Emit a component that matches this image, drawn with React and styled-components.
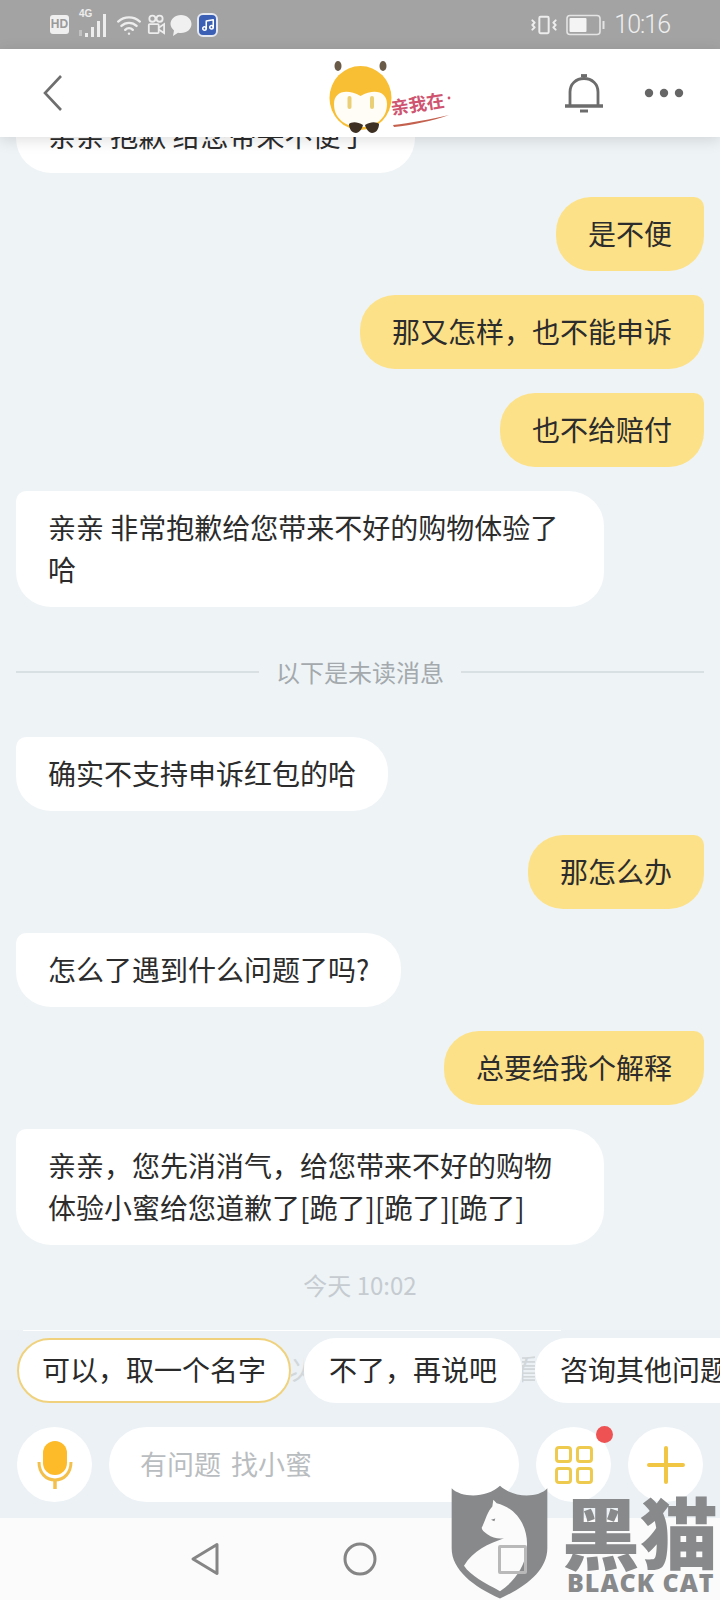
import React from 'react'
import styled, { createGlobalStyle } from 'styled-components'
import { Wifi, Vibrate, Music } from 'lucide-react'

const GlobalStyle = createGlobalStyle`
    html, body {
        margin: 0;
        padding: 0;
        background: #eef3f6;
    }
    * {
        box-sizing: border-box;
    }
`

const cjk = `"Noto Sans CJK SC", "Noto Sans", sans-serif`

const messages = [
    { id: 1, mine: false, width: 399, lines: ['亲亲 抱歉 给您带来不便了'] },
    { id: 2, mine: true, lines: ['是不便'] },
    { id: 3, mine: true, lines: ['那又怎样，也不能申诉'] },
    { id: 4, mine: true, lines: ['也不给赔付'] },
    { id: 5, mine: false, width: 588, lines: ['亲亲 非常抱歉给您带来不好的购物体验了', '哈'] },
    { id: 'unread', divider: '以下是未读消息' },
    { id: 6, mine: false, lines: ['确实不支持申诉红包的哈'] },
    { id: 7, mine: true, lines: ['那怎么办'] },
    { id: 8, mine: false, lines: ['怎么了遇到什么问题了吗?'] },
    { id: 9, mine: true, lines: ['总要给我个解释'] },
    { id: 10, mine: false, width: 588, lines: ['亲亲，您先消消气，给您带来不好的购物', '体验小蜜给您道歉了[跪了][跪了][跪了]'] },
]

export default function App() {
    return (
        <>
            <GlobalStyle />
            <Screen>
                <StatusBar>
                    <StatusGroup>
                        <HdBadge>HD</HdBadge>
                        <SignalIcon />
                        <Wifi size={26} color="#ededed" strokeWidth={2.2} />
                        <CameraIcon />
                        <ChatIcon />
                        <MusicBadge><Music size={14} color="#fff" strokeWidth={2.6} /></MusicBadge>
                    </StatusGroup>
                    <StatusRight>
                        <Vibrate size={28} color="#ededed" strokeWidth={1.7} />
                        <BatteryIcon />
                        <Clock>10:16</Clock>
                    </StatusRight>
                </StatusBar>

                <Header>
                    <BackIcon />
                    <LogoIcon />
                    <HeaderActions>
                        <BellIcon />
                        <MoreIcon />
                    </HeaderActions>
                </Header>

                <Chat>
                    {messages.map((m) =>
                        m.divider ? (
                            <Divider key={m.id}><span>{m.divider}</span></Divider>
                        ) : (
                            <Bubble key={m.id} $mine={m.mine} $width={m.width}>
                                {m.lines.map((line) => <div key={line}>{line}</div>)}
                            </Bubble>
                        )
                    )}
                    <TimeStamp>今天 10:02</TimeStamp>
                </Chat>

                <Composer>
                    <Chips>
                        <Chip $active>可以，取一个名字</Chip>
                        <GhostText>以</GhostText>
                        <Chip>不了，再说吧</Chip>
                        <GhostText>看</GhostText>
                        <Chip>咨询其他问题</Chip>
                    </Chips>
                    <InputRow>
                        <RoundButton><MicIcon /></RoundButton>
                        <InputBox>有问题 找小蜜</InputBox>
                        <RoundButton>
                            <GridIcon />
                            <RedDot />
                        </RoundButton>
                        <RoundButton><PlusIcon /></RoundButton>
                    </InputRow>
                </Composer>

                <NavBar>
                    <svg width="30" height="34" viewBox="0 0 30 34">
                        <path d="M28 2.5 L4 17 L28 31.5 Z" fill="none" stroke="#858585" strokeWidth="3" strokeLinejoin="round" />
                    </svg>
                    <svg width="34" height="34" viewBox="0 0 34 34">
                        <circle cx="17" cy="17" r="15" fill="none" stroke="#858585" strokeWidth="3" />
                    </svg>
                    <NavSquare />
                </NavBar>

                <Watermark>
                    <ShieldIcon />
                    <WatermarkText>
                        <WatermarkTitle>黑猫</WatermarkTitle>
                        <WatermarkSub>BLACK CAT</WatermarkSub>
                    </WatermarkText>
                </Watermark>
            </Screen>
        </>
    )
}

function SignalIcon() {
    return (
        <SignalWrap>
            <SignalLabel>4G</SignalLabel>
            <svg width="34" height="28" viewBox="0 0 34 28">
                <rect x="2" y="19" width="3" height="6" fill="#c2c2c2" />
                <rect x="8" y="22" width="3" height="4" fill="#ededed" />
                <rect x="14" y="16" width="3" height="10" fill="#ededed" />
                <rect x="20" y="10" width="3" height="16" fill="#ededed" />
                <rect x="26" y="3" width="3" height="23" fill="#ededed" />
            </svg>
        </SignalWrap>
    )
}

function CameraIcon() {
    return (
        <svg width="18" height="22" viewBox="0 0 20 24" fill="none" stroke="#ededed" strokeWidth="2">
            <circle cx="6" cy="5" r="3.4" />
            <circle cx="14" cy="5" r="3.4" />
            <rect x="2" y="11" width="11" height="10" rx="1" />
            <path d="M13 15 L19 11 V21 L13 17" />
        </svg>
    )
}

function ChatIcon() {
    return (
        <svg width="22" height="24" viewBox="0 0 22 24">
            <path d="M11 2 C17 2 21.5 6 21.5 11 C21.5 16 17 20 11 20 C10 20 9 20 8 19.7 L3 23 L4 17.4 C2 15.8 .5 13.6 .5 11 C.5 6 5 2 11 2 Z" fill="#f0f0f0" />
        </svg>
    )
}

function BatteryIcon() {
    return (
        <svg width="40" height="22" viewBox="0 0 40 22">
            <rect x="1" y="1.5" width="33" height="19" rx="3" fill="none" stroke="#e4e4e4" strokeWidth="1.6" />
            <rect x="3.5" y="4" width="17" height="14" rx="1" fill="#f4f4f4" />
            <rect x="36.5" y="7" width="2" height="8" fill="#e4e4e4" />
        </svg>
    )
}

function BackIcon() {
    return (
        <svg width="20" height="38" viewBox="0 0 20 38">
            <path d="M18 2 L2 19 L18 36" fill="none" stroke="#6e6e6e" strokeWidth="2.6" />
        </svg>
    )
}

function LogoIcon() {
    return (
        <LogoSvg width="130" height="80" viewBox="324 52 130 80">
            <ellipse cx="338" cy="62" rx="3.5" ry="5" fill="#6a5a48" />
            <ellipse cx="383" cy="62" rx="3.5" ry="5" fill="#6a5a48" />
            <ellipse cx="360.5" cy="94" rx="31" ry="32" fill="#f8bf35" />
            <path d="M334 100 C334 88 346 84 360.5 92 C375 84 387 88 387 100 C387 115 375 123 360.5 123 C346 123 334 115 334 100 Z" fill="#fffdf5" />
            <rect x="347.5" y="92" width="4" height="13" rx="2" fill="#ebcf76" />
            <rect x="370" y="92" width="4" height="13" rx="2" fill="#ebcf76" />
            <path d="M363 121 C357 117 351 118 349 120 C349 125 352 129 356 129 C359 129 362 125 363 121 Z" fill="#3d2f22" />
            <path d="M365 121 C371 117 377 118 379 120 C379 125 376 129 372 129 C369 129 366 125 365 121 Z" fill="#3d2f22" />
            <text x="392" y="111" transform="rotate(-9 392 111)" fontFamily={cjk} fontSize="18" fontWeight="700" fill="#cf5470">亲我在</text>
            <path d="M393 121 C410 119 432 115 449 111 C432 117 412 121 394 123 Z" fill="#c4604e" />
            <circle cx="449" cy="94" r="1.4" fill="#cf5470" />
        </LogoSvg>
    )
}

function BellIcon() {
    return (
        <svg width="40" height="40" viewBox="0 0 40 40" fill="none" stroke="#6c6c6c">
            <path d="M6 32 V19 C6 11 12 5.5 20 5.5 C28 5.5 34 11 34 19 V32" strokeWidth="2.8" />
            <path d="M1 33 H39" strokeWidth="3.4" />
            <path d="M17 2.6 H23" strokeWidth="3" />
            <path d="M16 38 H24" strokeWidth="3" />
        </svg>
    )
}

function MoreIcon() {
    return (
        <svg width="40" height="10" viewBox="0 0 40 10">
            <circle cx="5" cy="5" r="4.2" fill="#666" />
            <circle cx="20" cy="5" r="4.2" fill="#666" />
            <circle cx="35" cy="5" r="4.2" fill="#666" />
        </svg>
    )
}

function MicIcon() {
    return (
        <svg width="36" height="50" viewBox="0 0 36 50">
            <rect x="6" y="1" width="24" height="34" rx="12" fill="#fdbb29" />
            <path d="M2 22 C2 33 9 40 18 40 C27 40 34 33 34 22" fill="none" stroke="#f3c14b" strokeWidth="3" />
            <path d="M18 39 V49" stroke="#f3c14b" strokeWidth="3.5" />
        </svg>
    )
}

function GridIcon() {
    return (
        <svg width="38" height="38" viewBox="0 0 38 38" fill="none" stroke="#eecb4f" strokeWidth="3">
            <rect x="1.5" y="1.5" width="14" height="14" rx="2.5" />
            <rect x="22.5" y="1.5" width="14" height="14" rx="2.5" />
            <rect x="1.5" y="22.5" width="14" height="14" rx="2.5" />
            <rect x="22.5" y="22.5" width="14" height="14" rx="2.5" />
        </svg>
    )
}

function PlusIcon() {
    return (
        <svg width="38" height="38" viewBox="0 0 38 38" stroke="#f1c644" strokeWidth="4" strokeLinecap="round">
            <path d="M19 2 V36 M2 19 H36" />
        </svg>
    )
}

function ShieldIcon() {
    return (
        <svg width="100" height="117" viewBox="60 40 300 350">
            <path d="M65 55 C95 85 170 85 210 48 C250 85 325 85 352 55 V235 C352 300 290 350 210 386 C130 350 65 300 65 235 Z" fill="#88898b" />
            <path d="M190 90 L200 100 C262 115 298 175 290 240 C284 295 250 338 210 364 C165 340 122 318 102 288 C130 240 175 222 222 205 C205 207 188 205 172 193 C162 187 155 180 155 174 C165 155 172 125 187 110 Z" fill="#fbfbfb" />
            <path d="M183 150 L196 146 L193 154 Z" fill="#88898b" />
        </svg>
    )
}

const Screen = styled.div`
    position: relative;
    display: flex;
    flex-direction: column;
    width: 720px;
    height: 1600px;
    overflow: hidden;
    background: #eef3f6;
    font-family: ${cjk};
`

const StatusBar = styled.div`
    display: flex;
    align-items: center;
    justify-content: space-between;
    flex: 0 0 49px;
    padding: 0 50px;
    background: #a3a3a3;
`

const StatusGroup = styled.div`
    display: flex;
    align-items: center;
    gap: 5px;
`

const StatusRight = styled.div`
    display: flex;
    align-items: center;
    gap: 8px;
`

const HdBadge = styled.span`
    width: 19px;
    height: 19px;
    margin-right: 3px;
    border-radius: 3px;
    background: #efefef;
    color: #9a9a9a;
    font: 700 12px/19px "Liberation Sans", sans-serif;
    text-align: center;
`

const SignalWrap = styled.div`
    position: relative;
    display: flex;
`

const SignalLabel = styled.span`
    position: absolute;
    left: 2px;
    top: -3px;
    color: #ededed;
    font: 700 10px/12px "Liberation Sans", sans-serif;
`

const MusicBadge = styled.span`
    display: flex;
    align-items: center;
    justify-content: center;
    width: 21px;
    height: 24px;
    border: 2px solid #e6e9f2;
    border-radius: 6px;
    background: #3a5fb5;
`

const Clock = styled.span`
    color: #efefef;
    font: 300 25px/30px Roboto, sans-serif;
    letter-spacing: -1px;
`

const Header = styled.header`
    position: relative;
    z-index: 2;
    display: flex;
    align-items: center;
    flex: 0 0 88px;
    padding: 0 36px 0 43px;
    background: #fff;
    box-shadow: 0 3px 14px rgba(0, 0, 0, 0.13);
`

const LogoSvg = styled.svg`
    margin: 5px 0 0 261px;
`

const HeaderActions = styled.div`
    display: flex;
    align-items: center;
    gap: 40px;
    margin-left: auto;
`

const Chat = styled.main`
    display: flex;
    flex: 1;
    flex-direction: column;
    justify-content: flex-end;
    gap: 24px;
    min-height: 0;
    padding: 0 16px 28px;
    overflow: hidden;
`

const Bubble = styled.div`
    flex: none;
    align-self: ${(p) => (p.$mine ? 'flex-end' : 'flex-start')};
    width: ${(p) => (p.$width ? `${p.$width}px` : 'auto')};
    padding: 15px 32px 17px;
    border-radius: ${(p) => (p.$mine ? '35px 10px 35px 35px' : '10px 35px 35px 35px')};
    background: ${(p) => (p.$mine ? '#fde188' : '#fff')};
    color: #2c2c2c;
    font-size: 28px;
    line-height: 42px;
    white-space: nowrap;
`

const Divider = styled.div`
    display: flex;
    flex: none;
    align-items: center;
    gap: 17px;
    height: 40px;
    margin: 21px 0 21px;
    color: #a3a9ad;
    font-size: 24px;
    line-height: 40px;

    &::before,
    &::after {
        content: "";
        flex: 1;
        height: 2px;
        background: #d9e0e3;
    }
`

const TimeStamp = styled.div`
    flex: none;
    height: 34px;
    margin-top: -1px;
    color: #c5cbd0;
    font-size: 24px;
    line-height: 34px;
    text-align: center;
`

const Composer = styled.section`
    flex: 0 0 188px;
    padding: 7px 0 0 17px;
    border-top: 1px solid;
    border-image: linear-gradient(to right, transparent 24px, #fff 24px, #fff 560px, transparent 560px) 1;
    background: #ebf1f4;
`

const Chips = styled.div`
    display: flex;
    height: 65px;
    overflow: hidden;
`

const Chip = styled.div`
    flex: none;
    height: 65px;
    padding: 0 23px;
    border: 2px solid ${(p) => (p.$active ? '#f0d27e' : '#fff')};
    border-radius: 33px;
    background: #fff;
    color: #2a2a2a;
    font-size: 28px;
    line-height: 58px;
`

const GhostText = styled.span`
    flex: 0 0 13px;
    overflow: hidden;
    color: #d2d7da;
    font-size: 28px;
    line-height: 60px;
    text-indent: -8px;
    white-space: nowrap;
`

const InputRow = styled.div`
    display: flex;
    align-items: center;
    gap: 17px;
    margin-top: 24px;
`

const RoundButton = styled.div`
    position: relative;
    display: flex;
    align-items: center;
    justify-content: center;
    flex: 0 0 75px;
    height: 75px;
    border-radius: 50%;
    background: #fff;
`

const InputBox = styled.div`
    flex: 0 0 410px;
    height: 75px;
    padding-left: 31px;
    border-radius: 38px;
    background: #fff;
    color: #b9bdc0;
    font-size: 27px;
    line-height: 73px;
    word-spacing: 4px;
`

const RedDot = styled.span`
    position: absolute;
    top: -1px;
    right: -2px;
    width: 17px;
    height: 17px;
    border-radius: 50%;
    background: #ee5253;
`

const NavBar = styled.nav`
    display: flex;
    align-items: center;
    flex: 0 0 82px;
    gap: 124px;
    padding-left: 189px;
    background: #fbfbfb;
`

const NavSquare = styled.span`
    position: relative;
    z-index: 4;
    width: 29px;
    height: 29px;
    margin-left: -3px;
    border: 3px solid #b9b9b9;
    border-radius: 2px;
`

const Watermark = styled.div`
    position: absolute;
    left: 450px;
    top: 1483px;
    z-index: 3;
    display: flex;
    gap: 12px;
`

const WatermarkText = styled.div`
    display: flex;
    flex-direction: column;
    padding-top: 12px;
    color: #88898b;
`

const WatermarkTitle = styled.div`
    font-size: 78px;
    font-weight: 900;
    line-height: 70px;
    white-space: nowrap;
`

const WatermarkSub = styled.div`
    margin: 5px 0 0 5px;
    font: 800 25px/24px "Open Sans", sans-serif;
    letter-spacing: 1px;
    white-space: nowrap;
`
